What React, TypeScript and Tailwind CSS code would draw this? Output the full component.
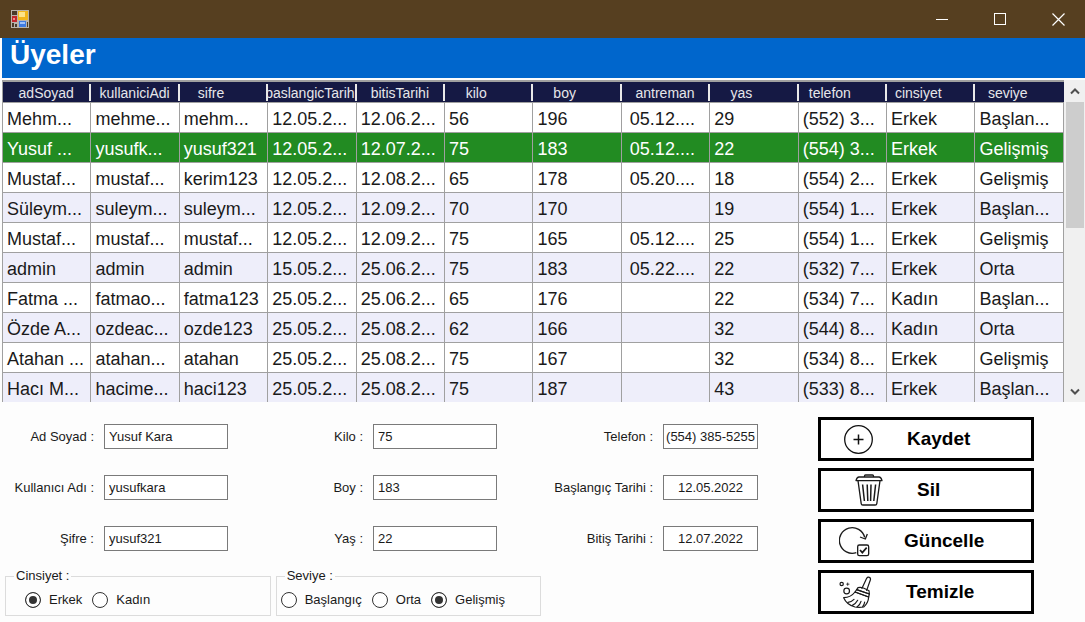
import React, { useState } from "react";
import clsx from "clsx";

const columns = [
  { key: "adSoyad", sortable: false },
  { key: "kullaniciAdi", sortable: false },
  { key: "sifre", sortable: true },
  { key: "baslangicTarihi", sortable: false },
  { key: "bitisTarihi", sortable: false },
  { key: "kilo", sortable: true },
  { key: "boy", sortable: true },
  { key: "antreman", sortable: false },
  { key: "yas", sortable: true },
  { key: "telefon", sortable: true },
  { key: "cinsiyet", sortable: true },
  { key: "seviye", sortable: true },
];

const rows = [
  ["Mehm...", "mehme...", "mehm...", "12.05.2...", "12.06.2...", "56", "196", "05.12....", "29", "(552) 3...", "Erkek", "Başlan..."],
  ["Yusuf ...", "yusufk...", "yusuf321", "12.05.2...", "12.07.2...", "75", "183", "05.12....", "22", "(554) 3...", "Erkek", "Gelişmiş"],
  ["Mustaf...", "mustaf...", "kerim123", "12.05.2...", "12.08.2...", "65", "178", "05.20....", "18", "(554) 2...", "Erkek", "Gelişmiş"],
  ["Süleym...", "suleym...", "suleym...", "12.05.2...", "12.09.2...", "70", "170", "", "19", "(554) 1...", "Erkek", "Başlan..."],
  ["Mustaf...", "mustaf...", "mustaf...", "12.05.2...", "12.09.2...", "75", "165", "05.12....", "25", "(554) 1...", "Erkek", "Gelişmiş"],
  ["admin", "admin", "admin", "15.05.2...", "25.06.2...", "75", "183", "05.22....", "22", "(532) 7...", "Erkek", "Orta"],
  ["Fatma ...", "fatmao...", "fatma123", "25.05.2...", "25.06.2...", "65", "176", "", "22", "(534) 7...", "Kadın", "Başlan..."],
  ["Özde A...", "ozdeac...", "ozde123", "25.05.2...", "25.08.2...", "62", "166", "", "32", "(544) 8...", "Kadın", "Orta"],
  ["Atahan ...", "atahan...", "atahan", "25.05.2...", "25.08.2...", "75", "167", "", "32", "(534) 8...", "Erkek", "Gelişmiş"],
  ["Hacı M...", "hacime...", "haci123", "25.05.2...", "25.08.2...", "75", "187", "", "43", "(533) 8...", "Erkek", "Başlan..."],
];

function AppIcon() {
  return (
    <svg width="18" height="18" viewBox="0 0 18 18" aria-hidden="true">
      <rect width="18" height="18" fill="#b9b3aa" />
      <rect x="1" y="1" width="5" height="4" fill="#4a3a28" />
      <rect x="1" y="6" width="5" height="6" fill="#c3262b" />
      <rect x="2" y="8" width="2" height="2" fill="#f08a8a" />
      <rect x="7" y="1" width="10" height="9" fill="#f2b61c" />
      <rect x="8" y="2" width="6" height="5" fill="#fde38a" />
      <rect x="8" y="11" width="7" height="6" fill="#3f7be0" />
      <rect x="9" y="12" width="5" height="2" fill="#9dc1fa" />
      <rect x="1" y="13" width="2" height="4" fill="#4a3a28" />
      <rect x="4" y="14" width="2" height="3" fill="#4a3a28" />
      <rect x="16" y="12" width="1" height="5" fill="#4a3a28" />
    </svg>
  );
}

function PlusIcon() {
  return (
    <svg width="29" height="29" viewBox="0 0 29 29" fill="none" stroke="#111" aria-hidden="true">
      <circle cx="14.5" cy="14.5" r="13.8" strokeWidth="1.3" />
      <path d="M14.5 9.5v10M9.5 14.5h10" strokeWidth="1.5" />
    </svg>
  );
}

function TrashIcon() {
  return (
    <svg width="28" height="32" viewBox="0 0 28 32" fill="none" stroke="#1a1a1a" strokeWidth="1.3" strokeLinejoin="round" aria-hidden="true">
      <path d="M9.5 3V2q0-1 1-1h7q1 0 1 1v1" />
      <path d="M4 3h20q2 0 3 3.600H1q1-3.600 3-3.600z" />
      <path d="M3 6.6l3.2 23q.2 1.4 1.6 1.4h12.4q1.4 0 1.6-1.4l3.2-23" />
      <path d="M7.6 10.5l1.8 16.5M12.2 10.5l.6 16.5M16 10.5l-.4 16.5M20.6 10.5l-1.8 16.5" strokeWidth="1.5" />
    </svg>
  );
}

function RefreshIcon() {
  return (
    <svg width="31" height="31" viewBox="27 34 93 93" fill="none" stroke="#1a1a1a" strokeWidth="4" aria-hidden="true">
      <path d="M79 114A38.5 38.5 0 1 1 104 68" />
      <path d="M90 67l16 6 6-15" />
      <rect x="83" y="91" width="33" height="32" rx="5" />
      <path d="M90 106l7 8 13-15" strokeWidth="5" />
    </svg>
  );
}

function BroomIcon() {
  return (
    <svg width="33" height="32" viewBox="30 191 99 96" fill="none" stroke="#1a1a1a" strokeWidth="3.6" strokeLinejoin="round" strokeLinecap="round" aria-hidden="true">
      <path d="M99 228l14-30q3-5 8-3t3 8l-11 31" />
      <path d="M87 226q8-2 16 1t17 8l1 10-38-13z" />
      <path d="M83 232l38 13-2 9-41-15z" />
      <path d="M78 239q-12 16-34 17 9 21 34 28 12 2 26 0 14-12 15-30z" />
      <path d="M57 270q10-1 18-9M70 279q10-4 16-15M84 284q9-6 12-17M101 283q5-6 6-14" />
      <circle cx="38" cy="215" r="5" />
      <circle cx="53" cy="236" r="8.5" />
      <path d="M56 212v7M53 215.5h7" strokeWidth="2.5" />
    </svg>
  );
}

function TextField({ id, label, value, wide = true }: { id: string; label: string; value: string; wide?: boolean }) {
  return (
    <div className="flex items-center justify-end gap-2.5">
      <label htmlFor={id} className="whitespace-nowrap">
        {label}
      </label>
      <input
        id={id}
        type="text"
        defaultValue={value}
        className={clsx(
          "h-[25px] border border-[#7a7a7a] bg-white outline-none",
          wide ? "w-[124px] px-1" : "w-[95px] text-center"
        )}
      />
    </div>
  );
}

function RadioGroup({ name, title, options, initial }: { name: string; title: string; options: string[]; initial: string }) {
  const [selected, setSelected] = useState(initial);
  return (
    <fieldset className="h-12 flex-1 border border-[#dcdcdc]">
      <legend className="ml-2 px-0.5 leading-4">{title}</legend>
      <div className={clsx("flex items-center gap-2.5 pt-2", options.length > 2 ? "pl-1" : "pl-[19px]")}>
        {options.map((option) => (
          <label key={option} className="flex items-center gap-2 leading-4">
            <input
              type="radio"
              name={name}
              checked={selected === option}
              onChange={() => setSelected(option)}
              className="size-4 appearance-none rounded-full border border-[#333] bg-white checked:bg-[#333] checked:shadow-[inset_0_0_0_3px_#fff]"
            />
            {option}
          </label>
        ))}
      </div>
    </fieldset>
  );
}

const actions = [
  { label: "Kaydet", Icon: PlusIcon, pad: "pl-[23px]" },
  { label: "Sil", Icon: TrashIcon, pad: "pl-[34px]" },
  { label: "Güncelle", Icon: RefreshIcon, pad: "pl-[18px]" },
  { label: "Temizle", Icon: BroomIcon, pad: "pl-[18px]" },
];

export default function App() {
  const [active, setActive] = useState(1);

  return (
    <div className="min-h-screen bg-[#fdfdfd] font-['Liberation_Sans',Arial,sans-serif] text-[13px] text-[#1a1a1a]">
      {/* Title bar */}
      <header className="flex h-[38px] items-center justify-between bg-[#563f20] text-white">
        <div className="pl-[11px]">
          <AppIcon />
        </div>
        <div className="flex h-full gap-1">
          <button aria-label="Minimize" className="flex w-[54px] items-center justify-center">
            <span className="h-px w-3 bg-white" />
          </button>
          <button aria-label="Maximize" className="flex w-[54px] items-center justify-center">
            <span className="size-3 border border-white" />
          </button>
          <button aria-label="Close" className="flex w-[54px] items-center justify-center">
            <svg width="13" height="13" viewBox="0 0 13 13" stroke="#fff" strokeWidth="1.2">
              <path d="M.5 .5l12 12M12.5 .5l-12 12" />
            </svg>
          </button>
        </div>
      </header>

      <h1 className="ml-0.5 h-10 bg-[#0066cc] pl-2 text-[28px] leading-[34px] font-bold text-white">Üyeler</h1>

      {/* Members grid */}
      <div className="mt-0.5 flex h-[322px] overflow-hidden pl-0.5">
        <div className="min-w-0 flex-1 overflow-hidden border-l border-[#a0a0a0]">
          <table className="w-full table-fixed border-separate border-spacing-0">
            <thead>
              <tr>
                {columns.map((column, i) => (
                  <th
                    key={column.key}
                    className="h-[23px] border-t-2 border-b border-[#a0a0a0] bg-[#151944] p-0 pt-px text-sm font-normal text-[#e6e6ea]"
                  >
                    <div
                      className={clsx(
                        "flex h-[17px] items-center justify-center overflow-hidden",
                        i < columns.length - 1 && "border-r-2 border-[#e8e8e8]",
                        column.sortable && "pr-6"
                      )}
                    >
                      {column.key}
                    </div>
                  </th>
                ))}
              </tr>
            </thead>
            <tbody>
              {rows.map((row, r) => (
                <tr
                  key={r}
                  onClick={() => setActive(r)}
                  className={clsx(
                    r === active ? "bg-[#228b22] text-white" : r % 2 ? "bg-[#eeeefa]" : "bg-white"
                  )}
                >
                  {row.map((cell, c) => (
                    <td
                      key={c}
                      className={clsx(
                        "h-[30px] overflow-hidden border-r border-b border-[#a0a0a0] p-0 pt-0.5 text-[18px] leading-6 whitespace-nowrap",
                        c === 7 ? "pl-2" : "pl-1"
                      )}
                    >
                      {cell}
                    </td>
                  ))}
                </tr>
              ))}
            </tbody>
          </table>
        </div>
        <div className="flex w-[21px] flex-col items-center bg-[#f0f0f0]">
          <div className="flex h-[22px] items-center justify-center">
            <svg width="10" height="7" viewBox="0 0 10 7" fill="none" stroke="#505050" strokeWidth="2">
              <path d="M1 5.5l4-4 4 4" />
            </svg>
          </div>
          <div className="h-[126px] w-[18px] bg-[#cdcdcd]" />
          <div className="mt-auto flex h-[22px] items-center justify-center">
            <svg width="10" height="7" viewBox="0 0 10 7" fill="none" stroke="#505050" strokeWidth="2">
              <path d="M1 1.5l4 4 4-4" />
            </svg>
          </div>
        </div>
      </div>

      {/* Member form */}
      <form className="grid grid-cols-[818fr_267fr]" onSubmit={(e) => e.preventDefault()}>
        <div className="pt-[22px]">
          <div className="grid grid-cols-[228fr_269fr_261fr_60fr]">
            <div className="flex flex-col gap-[26px]">
              <TextField id="adSoyad" label="Ad Soyad :" value="Yusuf Kara" />
              <TextField id="kullaniciAdi" label="Kullanıcı Adı :" value="yusufkara" />
              <TextField id="sifre" label="Şifre :" value="yusuf321" />
            </div>
            <div className="flex flex-col gap-[26px]">
              <TextField id="kilo" label="Kilo :" value="75" />
              <TextField id="boy" label="Boy :" value="183" />
              <TextField id="yas" label="Yaş :" value="22" />
            </div>
            <div className="flex flex-col gap-[26px]">
              <TextField id="telefon" label="Telefon :" value="(554) 385-5255" wide={false} />
              <TextField id="baslangic" label="Başlangıç Tarihi :" value="12.05.2022" wide={false} />
              <TextField id="bitis" label="Bitiş Tarihi :" value="12.07.2022" wide={false} />
            </div>
          </div>
          <div className="mt-[17px] flex w-2/3 gap-[5px] pr-1 pl-[5px]">
            <RadioGroup name="cinsiyet" title="Cinsiyet :" options={["Erkek", "Kadın"]} initial="Erkek" />
            <RadioGroup name="seviye" title="Seviye :" options={["Başlangıç", "Orta", "Gelişmiş"]} initial="Gelişmiş" />
          </div>
        </div>

        <div className="flex flex-col gap-[7px] pt-[15px] pr-[51px]">
          {actions.map(({ label, Icon, pad }) => (
            <button
              key={label}
              type="button"
              className={clsx(
                "flex h-11 items-center gap-[34px] border-[3px] border-black bg-white text-[19px] font-bold text-black",
                pad
              )}
            >
              <Icon />
              {label}
            </button>
          ))}
        </div>
      </form>
    </div>
  );
}
